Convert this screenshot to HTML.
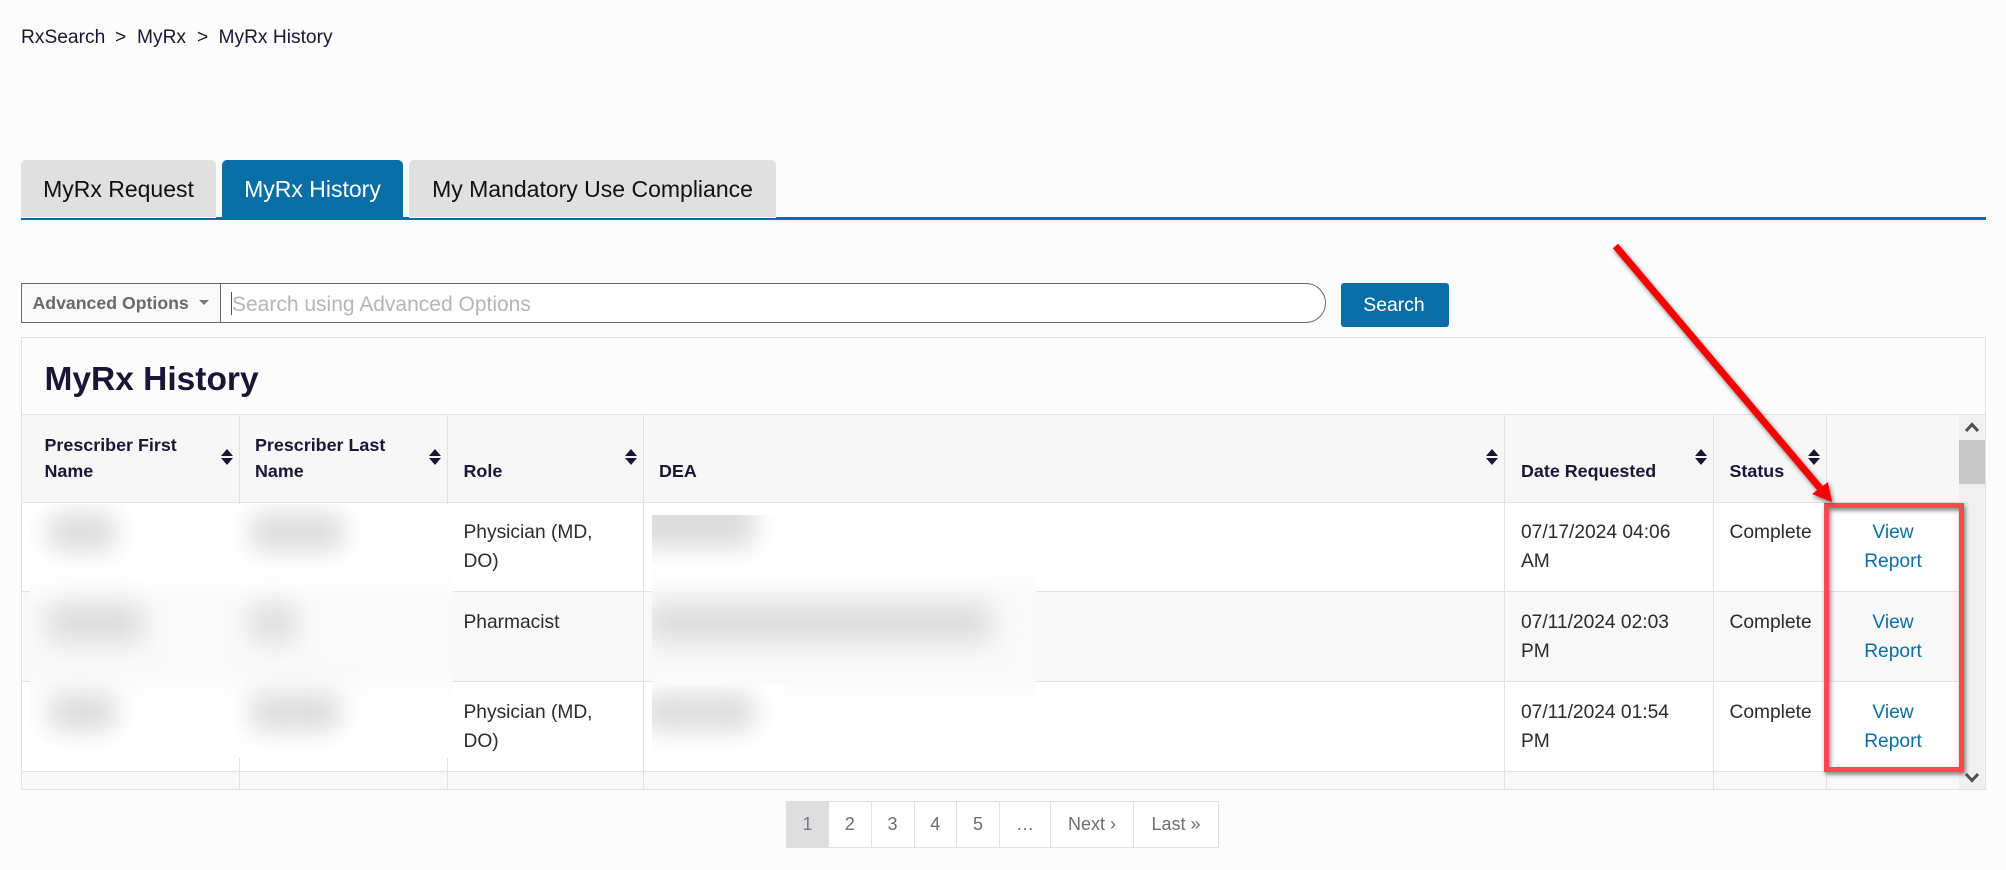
<!DOCTYPE html>
<html>
<head>
<meta charset="utf-8">
<style>
html,body{margin:0;padding:0;width:2006px;height:870px;overflow:hidden;background:#fcfcfc;font-family:"Liberation Sans",sans-serif;}
#p{position:relative;width:2006px;height:870px;overflow:hidden;}
#p div,#p span.a{position:absolute;}
.t{position:absolute;white-space:nowrap;line-height:30px;height:30px;}
.bc{font-size:19.2px;color:#1d1536;}
.tab{font-size:23px;text-align:center;background:#e0e0e0;border-radius:5px 5px 0 0;color:#111;line-height:58px;box-sizing:border-box;}
.th{font-size:17.9px;font-weight:bold;color:#1d1536;}
.td{font-size:19.2px;color:#292b2c;}
.lk{font-size:19.2px;color:#0a6ea6;text-align:center;width:140px;left:1823px;}
.vl{width:1.4px;background:#e2e2e2;top:414px;height:375px;}
.hl{height:1.4px;background:#e2e2e2;left:21px;width:1938px;}
.pg{top:801px;height:47px;border:1.4px solid #e2e2e2;border-left:none;box-sizing:border-box;background:#fff;color:#6e6e6e;font-size:18px;text-align:center;line-height:44px;}
.b{background:#d9dada;filter:blur(13px);}
</style>
</head>
<body>
<div id="p">
<span class="t bc" style="left:21px;top:22.500px">RxSearch</span>
<span class="t bc" style="left:115px;top:22.500px">&gt;</span>
<span class="t bc" style="left:137px;top:22.500px">MyRx</span>
<span class="t bc" style="left:197px;top:22.500px">&gt;</span>
<span class="t bc" style="left:218.500px;top:22.500px">MyRx History</span>

<div style="left:21px;top:216.500px;width:1965px;height:3.800px;background:#086fa6"></div>
<div class="tab" style="left:21px;top:160px;width:195px;height:58px;border-bottom:1.200px solid #fcfcfc">MyRx Request</div>
<div class="tab" style="left:222px;top:160px;width:181px;height:60px;background:#086fa6;color:#fff">MyRx History</div>
<div class="tab" style="left:409px;top:160px;width:367px;height:58px;border-bottom:1.200px solid #fcfcfc">My Mandatory Use Compliance</div>

<div style="left:21px;top:283px;width:200px;height:40px;box-sizing:border-box;border:1.4px solid #66686a;background:#f9f9f9"></div>
<span class="t" style="left:32.500px;top:288px;font-size:17.700px;font-weight:bold;color:#6a6a6a">Advanced Options</span>
<div style="left:199px;top:300px;width:0;height:0;border-left:5px solid transparent;border-right:5px solid transparent;border-top:5px solid #777"></div>
<div style="left:220px;top:283px;width:1106px;height:40px;box-sizing:border-box;border:1.4px solid #66686a;border-radius:0 20px 20px 0;background:#fff"></div>
<div style="left:231px;top:292px;width:1.2px;height:23px;background:#555"></div>
<span class="t" style="left:232px;top:289.500px;font-size:21px;color:#b5b5b5">Search using Advanced Options</span>
<div style="left:1341px;top:283px;width:106px;padding-right:2px;height:44px;background:#086fa6;border-radius:3px;color:#fff;font-size:19.400px;text-align:center;line-height:45px">Search</div>

<div style="left:21px;top:337px;width:1965px;height:453px;box-sizing:border-box;border:1.4px solid #e2e2e2;background:#fcfcfc"></div>
<span class="t" style="left:44.500px;top:364px;font-size:33.500px;font-weight:bold;color:#1d1536;line-height:32px;height:32px">MyRx History</span>

<!-- table backgrounds -->
<div style="left:22px;top:414px;width:1937px;height:88px;background:#f7f7f7"></div>
<div style="left:22px;top:502px;width:1937px;height:89px;background:#fff"></div>
<div style="left:22px;top:591px;width:1937px;height:90px;background:#f8f8f8"></div>
<div style="left:22px;top:681px;width:1937px;height:90px;background:#fff"></div>
<div style="left:22px;top:771px;width:1937px;height:18px;background:#f8f8f8"></div>

<div class="hl" style="top:414px;width:1964px"></div>
<div class="hl" style="top:501.500px"></div>
<div class="hl" style="top:591px"></div>
<div class="hl" style="top:681px"></div>
<div class="hl" style="top:771px"></div>
<div class="vl" style="left:239px"></div>
<div class="vl" style="left:447px"></div>
<div class="vl" style="left:643px"></div>
<div class="vl" style="left:1504px"></div>
<div class="vl" style="left:1713px"></div>
<div class="vl" style="left:1826px"></div>

<!-- redaction patches -->
<div style="left:30px;top:504px;width:423px;height:254px;overflow:hidden;background:linear-gradient(#fff 0,#fff 26%,#f9f9f9 40%,#f9f9f9 66%,#fff 78%,#fff 100%)">
  <div class="b" style="left:19px;top:10px;width:66px;height:36px"></div>
  <div class="b" style="left:221px;top:10px;width:92px;height:36px"></div>
  <div class="b" style="left:19px;top:101px;width:92px;height:36px"></div>
  <div class="b" style="left:223px;top:101px;width:40px;height:36px"></div>
  <div class="b" style="left:19px;top:190px;width:66px;height:36px"></div>
  <div class="b" style="left:221px;top:190px;width:88px;height:36px"></div>
</div>
<div style="left:652px;top:515px;width:135px;height:60px;background:#fff;overflow:hidden">
  <div class="b" style="left:-20px;top:-14px;width:122px;height:46px"></div>
</div>
<div style="left:652px;top:565px;width:384px;height:141px;overflow:hidden;background:linear-gradient(#fff 0,#f9f9f9 22%,#f9f9f9 82%,#fff 100%)">
  <div class="b" style="left:-4px;top:40px;width:342px;height:36px"></div>
</div>
<div style="left:652px;top:684px;width:133px;height:67px;background:#fff;overflow:hidden">
  <div class="b" style="left:-10px;top:10px;width:112px;height:36px"></div>
</div>

<!-- header text -->
<span class="t th" style="left:44.500px;top:430px;line-height:30px">Prescriber First</span>
<span class="t th" style="left:44.500px;top:456px">Name</span>
<span class="t th" style="left:255px;top:430px">Prescriber Last</span>
<span class="t th" style="left:255px;top:456px">Name</span>
<span class="t th" style="left:463.500px;top:456px">Role</span>
<span class="t th" style="left:659px;top:456px">DEA</span>
<span class="t th" style="left:1521px;top:456px">Date Requested</span>
<span class="t th" style="left:1729.500px;top:456px">Status</span>

<!-- sort icons -->
<svg style="position:absolute;left:0;top:0" width="2006" height="870">
<g fill="#1d1536">
<path d="M221 456h12l-6-7zM221 458h12l-6 7z"/>
<path d="M429 456h12l-6-7zM429 458h12l-6 7z"/>
<path d="M625 456h12l-6-7zM625 458h12l-6 7z"/>
<path d="M1486 456h12l-6-7zM1486 458h12l-6 7z"/>
<path d="M1695 456h12l-6-7zM1695 458h12l-6 7z"/>
<path d="M1808 456h12l-6-7zM1808 458h12l-6 7z"/>
</g>
</svg>

<!-- cells -->
<span class="t td" style="left:463.500px;top:518px">Physician (MD,</span>
<span class="t td" style="left:463.500px;top:547px">DO)</span>
<span class="t td" style="left:463.500px;top:608px">Pharmacist</span>
<span class="t td" style="left:463.500px;top:698px">Physician (MD,</span>
<span class="t td" style="left:463.500px;top:727px">DO)</span>

<span class="t td" style="left:1521px;top:518px">07/17/2024 04:06</span>
<span class="t td" style="left:1521px;top:547px">AM</span>
<span class="t td" style="left:1521px;top:608px">07/11/2024 02:03</span>
<span class="t td" style="left:1521px;top:637px">PM</span>
<span class="t td" style="left:1521px;top:698px">07/11/2024 01:54</span>
<span class="t td" style="left:1521px;top:727px">PM</span>

<span class="t td" style="left:1729.500px;top:518px">Complete</span>
<span class="t td" style="left:1729.500px;top:608px">Complete</span>
<span class="t td" style="left:1729.500px;top:698px">Complete</span>

<span class="t lk" style="top:518px">View</span>
<span class="t lk" style="top:547px">Report</span>
<span class="t lk" style="top:608px">View</span>
<span class="t lk" style="top:637px">Report</span>
<span class="t lk" style="top:698px">View</span>
<span class="t lk" style="top:727px">Report</span>

<!-- scrollbar -->
<div style="left:1959px;top:415px;width:26px;height:374px;background:#f0f0f0"></div>
<div style="left:1959px;top:440px;width:26px;height:44px;background:#c8c8c8"></div>
<svg style="position:absolute;left:0;top:0" width="2006" height="870">
<path d="M1966 431l6-6.500 6 6.500" fill="none" stroke="#505050" stroke-width="3"/>
<path d="M1966 774l6 6.500 6-6.500" fill="none" stroke="#505050" stroke-width="3"/>
</svg>

<!-- pagination -->
<div class="pg" style="left:786px;width:43px;background:#dedede;border:none;line-height:47px;color:#737a85">1</div>
<div class="pg" style="left:829px;width:42.500px;border-left:none">2</div>
<div class="pg" style="left:871.500px;width:43px">3</div>
<div class="pg" style="left:914.500px;width:42.500px">4</div>
<div class="pg" style="left:957px;width:43px">5</div>
<div class="pg" style="left:1000px;width:51px">…</div>
<div class="pg" style="left:1051px;width:83px">Next ›</div>
<div class="pg" style="left:1134px;width:85px">Last »</div>

<!-- red annotation -->
<svg style="position:absolute;left:0;top:0" width="2006" height="870">
<defs>
<filter id="s" x="-10%" y="-10%" width="120%" height="120%"><feDropShadow dx="1.500" dy="2.500" stdDeviation="2" flood-color="#000" flood-opacity="0.500"/></filter>
</defs>
<rect x="1826.500" y="505.500" width="135" height="264" fill="none" stroke="#fb474d" stroke-width="5" filter="url(#s)"/>
<g filter="url(#s)">
<path d="M1615.500 246L1820 488" stroke="#f60000" stroke-width="7" fill="none"/>
<path d="M1832 502L1812 494L1828 482z" fill="#f60000"/>
</g>
</svg>
</div>
</body>
</html>
